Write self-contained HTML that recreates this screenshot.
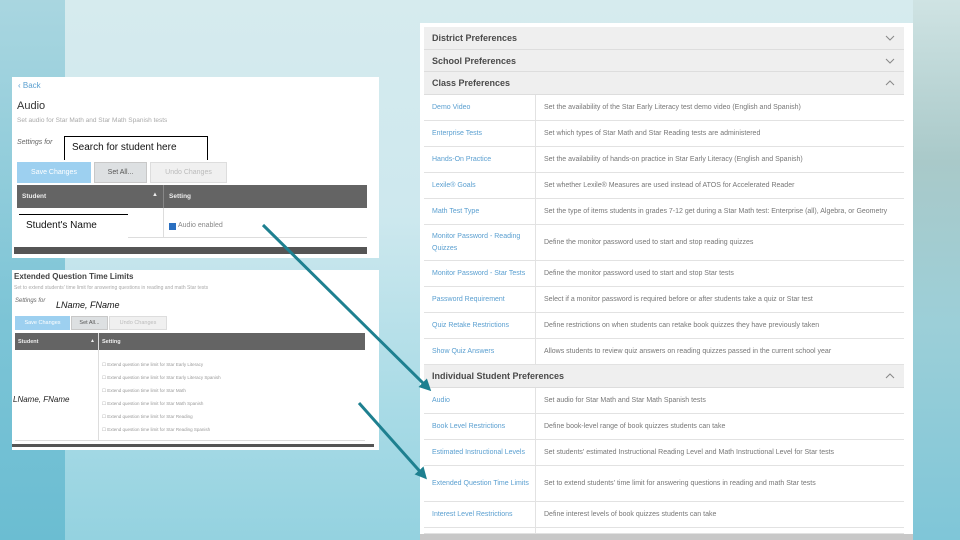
<!DOCTYPE html>
<html><head><meta charset="utf-8"><style>
*{margin:0;padding:0;box-sizing:border-box}
body{width:960px;height:540px;overflow:hidden;position:relative;font-family:"Liberation Sans",sans-serif;
background:linear-gradient(180deg,#d6ebee 0%,#cde8ee 40%,#a9dbe6 75%,#94d2e0 100%)}
.strip{position:absolute;left:0;top:0;width:65px;height:540px;background:linear-gradient(180deg,#a9d6e0,#7cc4d6 60%,#6bbdd2)}
.rside{position:absolute;left:913px;top:0;width:47px;height:540px;background:linear-gradient(180deg,#cfe3e3 0%,#a9c9c9 30%,#9ccfd8 60%,#7fc6d8 100%)}
.abs{position:absolute}
.p{background:#fff}
.txt{font-size:7px;color:#888}
.blue{color:#5a9fd0}
.hdr{position:absolute;left:424px;width:480px;background:#efefef;border-bottom:1px solid #ddd;font-size:9px;font-weight:bold;color:#4a4a4a;padding-left:8px;display:flex;align-items:center}
.hdr svg{position:absolute;right:9px}
.row{position:absolute;left:424px;width:480px;border-bottom:1px solid #e2e2e2;font-size:7px;display:flex;align-items:center;background:#fff}
.row .a{width:112px;padding-left:8px;color:#5a9fd0;border-right:1px solid #e2e2e2;height:100%;display:flex;align-items:center;line-height:12px}
.row .b{padding-left:8px;color:#777}
.btn{position:absolute;font-size:7px;display:flex;align-items:center;justify-content:center}
</style></head><body>
<div class="strip"></div><div class="rside"></div>

<!-- Panel 1 -->
<div class="abs p" style="left:12px;top:77px;width:367px;height:181px">
  <div class="abs blue" style="left:6px;top:4px;font-size:8px">&#8249; Back</div>
  <div class="abs" style="left:5px;top:23px;font-size:11px;color:#333">Audio</div>
  <div class="abs txt" style="left:5px;top:40px;font-size:6.5px;color:#aaa">Set audio for Star Math and Star Math Spanish tests</div>
  <div class="abs" style="left:5px;top:62px;font-size:7px;font-style:italic;color:#666">Settings for</div>
  <div class="abs" style="left:52px;top:59px;width:144px;height:24px;border:1px solid #000;border-bottom:none;background:#fff;font-size:10px;padding:5px 0 0 7px;color:#111">Search for student here</div>
  <div class="btn" style="left:5px;top:85px;width:74px;height:21px;background:#9dd0f0;color:#fff">Save Changes</div>
  <div class="btn" style="left:82px;top:85px;width:53px;height:21px;background:#dde0e2;border:1px solid #c8c8c8;color:#555">Set All...</div>
  <div class="btn" style="left:138px;top:85px;width:77px;height:21px;background:#f0f0f0;border:1px solid #ddd;color:#bbb">Undo Changes</div>
  <div class="abs" style="left:5px;top:108px;width:350px;height:23px;background:#646464"></div>
  <div class="abs" style="left:151px;top:108px;width:1px;height:53px;background:#ddd"></div>
  <div class="abs" style="left:151px;top:108px;width:1px;height:23px;background:#888"></div>
  <div class="abs" style="left:10px;top:116px;font-size:6.5px;color:#eee;font-weight:bold">Student</div>
  <div class="abs" style="left:140px;top:115px;font-size:6px;color:#eee">&#9650;</div>
  <div class="abs" style="left:157px;top:116px;font-size:6.5px;color:#eee;font-weight:bold">Setting</div>
  <div class="abs" style="left:7px;top:137px;width:109px;height:1px;background:#000"></div>
  <div class="abs" style="left:14px;top:143px;font-size:10px;color:#111">Student's Name</div>
  <div class="abs" style="left:157px;top:146px;width:7px;height:7px;background:#2a6fc0"></div>
  <div class="abs" style="left:166px;top:145px;font-size:7px;color:#888">Audio enabled</div>
  <div class="abs" style="left:116px;top:160px;width:239px;height:1px;background:#ddd"></div>
  <div class="abs" style="left:2px;top:170px;width:353px;height:7px;background:#555"></div>
</div>

<!-- Panel 2 -->
<div class="abs p" style="left:12px;top:270px;width:367px;height:180px">
  <div class="abs" style="left:2px;top:2px;font-size:8px;color:#444;font-weight:bold">Extended Question Time Limits</div>
  <div class="abs" style="left:2px;top:15px;font-size:5px;color:#aaa">Set to extend students' time limit for answering questions in reading and math Star tests</div>
  <div class="abs" style="left:3px;top:28px;font-size:6px;font-style:italic;color:#666">Settings for</div>
  <div class="abs" style="left:44px;top:30px;font-size:9px;font-style:italic;color:#111">LName, FName</div>
  <div class="btn" style="left:3px;top:46px;width:55px;height:14px;background:#9dd0f0;color:#fff;font-size:5.5px">Save Changes</div>
  <div class="btn" style="left:59px;top:46px;width:37px;height:14px;background:#dde0e2;border:1px solid #c8c8c8;color:#555;font-size:5.5px">Set All...</div>
  <div class="btn" style="left:97px;top:46px;width:58px;height:14px;background:#f0f0f0;border:1px solid #ddd;color:#bbb;font-size:5.5px">Undo Changes</div>
  <div class="abs" style="left:3px;top:63px;width:350px;height:17px;background:#646464"></div>
  <div class="abs" style="left:86px;top:63px;width:1px;height:107px;background:#ddd"></div>
  <div class="abs" style="left:6px;top:69px;font-size:5.5px;color:#eee;font-weight:bold">Student</div>
  <div class="abs" style="left:78px;top:68px;font-size:5px;color:#eee">&#9650;</div>
  <div class="abs" style="left:90px;top:69px;font-size:5.5px;color:#eee;font-weight:bold">Setting</div>
  <div class="abs" style="left:1px;top:125px;font-size:8px;font-style:italic;color:#222">LName, FName</div>
  <div class="abs" style="left:90px;top:88px;font-size:4.5px;color:#999;line-height:13px">
  &#9744; Extend question time limit for Star Early Literacy<br>&#9744; Extend question time limit for Star Early Literacy Spanish<br>&#9744; Extend question time limit for Star Math<br>&#9744; Extend question time limit for Star Math Spanish<br>&#9744; Extend question time limit for Star Reading<br>&#9744; Extend question time limit for Star Reading Spanish</div>
  <div class="abs" style="left:3px;top:170px;width:350px;height:1px;background:#ddd"></div>
  <div class="abs" style="left:0px;top:174px;width:362px;height:3px;background:#555"></div>
</div>

<!-- Right panel -->
<div class="abs p" style="left:420px;top:23px;width:493px;height:517px"></div>
<div class="hdr" style="top:27px;height:23px">District Preferences<svg width="10" height="6"><path d="M1 1 L5 5 L9 1" fill="none" stroke="#888" stroke-width="1"/></svg></div>
<div class="hdr" style="top:50px;height:22px">School Preferences<svg width="10" height="6"><path d="M1 1 L5 5 L9 1" fill="none" stroke="#888" stroke-width="1"/></svg></div>
<div class="hdr" style="top:72px;height:23px">Class Preferences<svg width="10" height="6"><path d="M1 5 L5 1 L9 5" fill="none" stroke="#888" stroke-width="1"/></svg></div>
<div class="row" style="top:95px;height:26px"><div class="a">Demo Video</div><div class="b">Set the availability of the Star Early Literacy test demo video (English and Spanish)</div></div>
<div class="row" style="top:121px;height:26px"><div class="a">Enterprise Tests</div><div class="b">Set which types of Star Math and Star Reading tests are administered</div></div>
<div class="row" style="top:147px;height:26px"><div class="a">Hands-On Practice</div><div class="b">Set the availability of hands-on practice in Star Early Literacy (English and Spanish)</div></div>
<div class="row" style="top:173px;height:26px"><div class="a">Lexile® Goals</div><div class="b">Set whether Lexile® Measures are used instead of ATOS for Accelerated Reader</div></div>
<div class="row" style="top:199px;height:26px"><div class="a">Math Test Type</div><div class="b">Set the type of items students in grades 7-12 get during a Star Math test: Enterprise (all), Algebra, or Geometry</div></div>
<div class="row" style="top:225px;height:36px"><div class="a">Monitor Password - Reading Quizzes</div><div class="b">Define the monitor password used to start and stop reading quizzes</div></div>
<div class="row" style="top:261px;height:26px"><div class="a">Monitor Password - Star Tests</div><div class="b">Define the monitor password used to start and stop Star tests</div></div>
<div class="row" style="top:287px;height:26px"><div class="a">Password Requirement</div><div class="b">Select if a monitor password is required before or after students take a quiz or Star test</div></div>
<div class="row" style="top:313px;height:26px"><div class="a">Quiz Retake Restrictions</div><div class="b">Define restrictions on when students can retake book quizzes they have previously taken</div></div>
<div class="row" style="top:339px;height:26px"><div class="a">Show Quiz Answers</div><div class="b">Allows students to review quiz answers on reading quizzes passed in the current school year</div></div>
<div class="hdr" style="top:365px;height:23px">Individual Student Preferences<svg width="10" height="6"><path d="M1 5 L5 1 L9 5" fill="none" stroke="#888" stroke-width="1"/></svg></div>
<div class="row" style="top:388px;height:26px"><div class="a">Audio</div><div class="b">Set audio for Star Math and Star Math Spanish tests</div></div>
<div class="row" style="top:414px;height:26px"><div class="a">Book Level Restrictions</div><div class="b">Define book-level range of book quizzes students can take</div></div>
<div class="row" style="top:440px;height:26px"><div class="a">Estimated Instructional Levels</div><div class="b">Set students' estimated Instructional Reading Level and Math Instructional Level for Star tests</div></div>
<div class="row" style="top:466px;height:36px"><div class="a">Extended Question Time Limits</div><div class="b">Set to extend students' time limit for answering questions in reading and math Star tests</div></div>
<div class="row" style="top:502px;height:26px"><div class="a">Interest Level Restrictions</div><div class="b">Define interest levels of book quizzes students can take</div></div>
<div class="row" style="top:528px;height:6px"><div class="a"></div></div>
<div class="abs" style="left:420px;top:534px;width:493px;height:6px;background:#c8c8c8"></div>

<svg class="abs" style="left:0;top:0" width="960" height="540">
<defs><marker id="ah" markerWidth="4" markerHeight="4" refX="2.5" refY="2" orient="auto"><path d="M0,0 L4,2 L0,4 Z" fill="#1e8090"/></marker></defs>
<line x1="263" y1="225" x2="428" y2="388" stroke="#1e8090" stroke-width="3" marker-end="url(#ah)"/>
<line x1="359" y1="403" x2="424" y2="476" stroke="#1e8090" stroke-width="3" marker-end="url(#ah)"/>
</svg>
</body></html>
